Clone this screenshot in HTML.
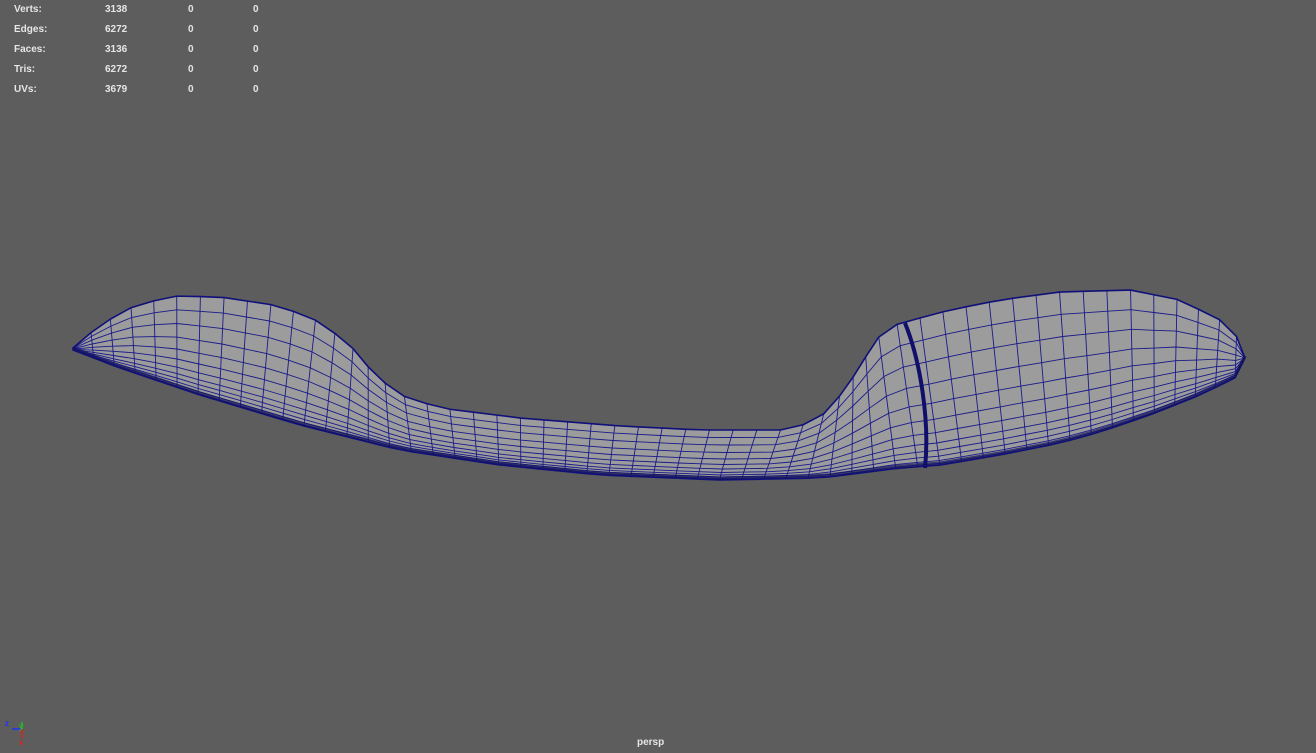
<!DOCTYPE html>
<html><head><meta charset="utf-8"><style>
html,body{margin:0;padding:0;background:#5d5d5d;width:1316px;height:753px;overflow:hidden;font-family:"Liberation Sans",sans-serif}
.hud{position:absolute;color:#e6e6e6;font-size:10px;font-weight:bold}
</style></head><body>
<div class="hud" style="left:14px;top:0px;line-height:20px">Verts:<br>Edges:<br>Faces:<br>Tris:<br>UVs:</div>
<div class="hud" style="left:105px;top:0px;line-height:20px">3138<br>6272<br>3136<br>6272<br>3679</div>
<div class="hud" style="left:188px;top:0px;line-height:20px">0<br>0<br>0<br>0<br>0</div>
<div class="hud" style="left:253px;top:0px;line-height:20px">0<br>0<br>0<br>0<br>0</div>
<div class="hud" style="left:637px;top:737px;font-size:10px">persp</div>
<svg width="1316" height="753" style="position:absolute;left:0;top:0" id="s">
<g font-family="Liberation Sans" font-size="8" font-weight="bold">
<line x1="12" y1="729" x2="22" y2="729" stroke="#2030ff" stroke-width="1.5"/>
<line x1="22" y1="729" x2="22" y2="722" stroke="#20c020" stroke-width="1.5"/>
<line x1="22" y1="729" x2="22" y2="738" stroke="#e02020" stroke-width="1.5"/>
<text x="5" y="726" fill="#2030ff">z</text><text x="19" y="729" fill="#20c020">y</text><text x="19" y="745" fill="#e02020">x</text>
</g>
<g id="m"></g>
</svg>
<script>
var top_=[[73,348],[100,325],[130,308],[170,296],[220,297],[280,306],[320,322],[350,345],[375,375],[400,395],[440,408],[520,418],[620,426],[700,430],[790,430],[820,418],[845,390],[870,350],[885,328],[905,322],[950,310],[1000,300],[1060,292],[1130,290],[1180,300],[1220,320],[1240,340],[1245,358]];
var bot_=[[73,350],[120,368],[200,395],[300,425],[400,450],[500,465],[600,475],[720,480],[820,478],[900,468],[940,465],[1000,455],[1060,443],[1100,432],[1150,415],[1200,395],[1235,378],[1245,358]];
function res(p,n){var L=[0];for(var i=1;i<p.length;i++)L.push(L[i-1]+Math.hypot(p[i][0]-p[i-1][0],p[i][1]-p[i-1][1]));var T=L[L.length-1],o=[];
for(var k=0;k<n;k++){var d=T*k/(n-1),j=1;while(j<L.length-1&&L[j]<d)j++;var f=(d-L[j-1])/(L[j]-L[j-1]||1);o.push([p[j-1][0]+(p[j][0]-p[j-1][0])*f,p[j-1][1]+(p[j][1]-p[j-1][1])*f]);}return o;}
var N=56,A=res(top_,N),B=res(bot_,N);
var g=document.getElementById('m'),h='';
var outline=A.map(p=>p.join(',')).join(' ')+' '+B.slice().reverse().map(p=>p.join(',')).join(' ');
h+='<polygon points="'+outline+'" fill="#9c9c9c"/>';
var fr=[0.15,0.3,0.45,0.58,0.69,0.78,0.85,0.9,0.94,0.97,0.99];
fr.forEach(function(f){var pts=A.map((p,i)=>[(p[0]+(B[i][0]-p[0])*f).toFixed(1),(p[1]+(B[i][1]-p[1])*f).toFixed(1)].join(','));
h+='<polyline points="'+pts.join(' ')+'" fill="none" stroke="#1a1a8a" stroke-width="0.9"/>';});
for(var i=1;i<N-1;i++){h+='<line x1="'+A[i][0]+'" y1="'+A[i][1]+'" x2="'+B[i][0]+'" y2="'+B[i][1]+'" stroke="#1a1a8a" stroke-width="0.9"/>';}
h+='<polygon points="'+outline+'" fill="none" stroke="#10107a" stroke-width="1.6"/>';
h+='<polyline points="'+B.map(p=>p[0]+','+(p[1]-2)).join(' ')+'" fill="none" stroke="#14145a" stroke-width="3" opacity="0.7"/>';
h+='<path d="M905,323 C920,360 930,420 925,468" fill="none" stroke="#10106a" stroke-width="4"/>';
g.innerHTML=h;
</script>
</body></html>
